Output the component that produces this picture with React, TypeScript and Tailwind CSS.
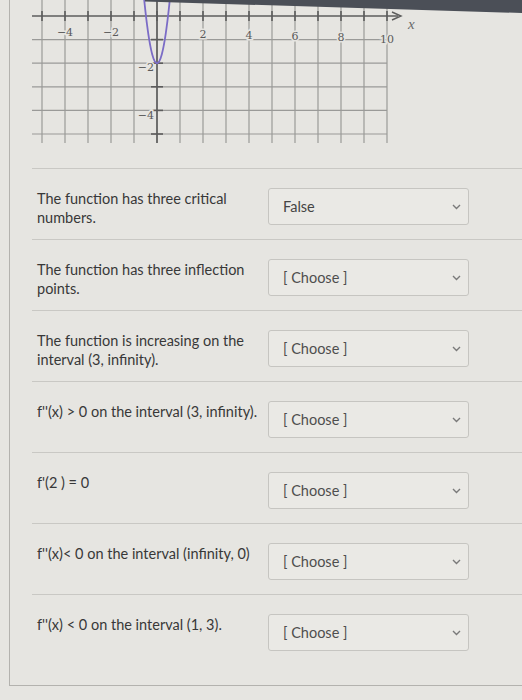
import React from "react";

const rows: { text: string; value: string }[] = [
  { text: "The function has three critical numbers.", value: "False" },
  { text: "The function has three inflection points.", value: "[ Choose ]" },
  { text: "The function is increasing on the interval (3, infinity).", value: "[ Choose ]" },
  { text: "f''(x) > 0 on the interval (3, infinity).", value: "[ Choose ]" },
  { text: "f'(2 ) = 0", value: "[ Choose ]" },
  { text: "f''(x)< 0 on the interval (infinity, 0)", value: "[ Choose ]" },
  { text: "f''(x) < 0 on the interval (1, 3).", value: "[ Choose ]" },
];

const X0 = 42;
const DX = 23;
const Y0 = 16;
const DY = 23.6;
const px = (u: number) => X0 + DX * (u + 5);
const py = (v: number) => Y0 - DY * v;

const labelCls =
  "font-['DejaVu_Serif','Liberation_Serif',serif] text-[11px] fill-[#5a5a5a] stroke-[#e6e5e1] stroke-[3px] [paint-order:stroke]";

function Graph() {
  const verticals = Array.from({ length: 16 }, (_, i) => i - 5);
  const horizontals = [-1, -2, -3, -4, -5];
  const pts: string[] = [];
  for (let i = -60; i <= 60; i++) {
    const u = i / 100;
    const v = 8.7 * u * u - 2;
    pts.push(`${px(u).toFixed(2)},${py(v).toFixed(2)}`);
  }
  const xLabels: [number, string, number][] = [
    [-4, "−4", 36],
    [-2, "−2", 36],
    [2, "2", 38],
    [4, "4", 39],
    [6, "6", 40],
    [8, "8", 41],
    [10, "10", 43],
  ];
  return (
    <svg width={512} height={168} viewBox="10 0 512 168" className="block">
      {verticals.map((u) => (
        <line key={"v" + u} x1={px(u)} y1={0} x2={px(u)} y2={143} stroke="#9a9a98" strokeWidth={1.2} />
      ))}
      {horizontals.map((v) => (
        <line key={"h" + v} x1={32} y1={py(v)} x2={px(10)} y2={py(v)} stroke="#9a9a98" strokeWidth={1.2} />
      ))}
      <line x1={32} y1={Y0} x2={398} y2={Y0} stroke="#5c5c5c" strokeWidth={1.6} />
      <path d={`M392 ${Y0 - 4} L401 ${Y0} L392 ${Y0 + 4}`} fill="none" stroke="#5c5c5c" strokeWidth={1.4} />
      {verticals.map((u) => (
        <line key={"t" + u} x1={px(u)} y1={Y0 - 5} x2={px(u)} y2={Y0 + 5} stroke="#5c5c5c" strokeWidth={1.6} />
      ))}
      <line x1={px(0)} y1={0} x2={px(0)} y2={143} stroke="#5c5c5c" strokeWidth={1.6} />
      {horizontals.map((v) => (
        <line key={"yt" + v} x1={px(0) - 6} y1={py(v)} x2={px(0) + 6} y2={py(v)} stroke="#5c5c5c" strokeWidth={1.6} />
      ))}
      {xLabels.map(([u, t, y]) => (
        <text key={"xl" + u} x={px(u)} y={y} textAnchor="middle" className={labelCls}>
          {t}
        </text>
      ))}
      <text x={px(0) - 3} y={71} textAnchor="end" className={labelCls}>
        −2
      </text>
      <text x={px(0) - 3} y={119} textAnchor="end" className={labelCls}>
        −4
      </text>
      <text x={408} y={29} className="font-['Liberation_Serif',serif] italic text-[15px] fill-[#6a6a6a]">
        x
      </text>
      <polyline points={pts.join(" ")} fill="none" stroke="#7b6cc6" strokeWidth={1.8} />
      <polygon points="145,0 522,0 522,13 145,1.5" fill="#4b4f57" />
    </svg>
  );
}

function Chevron() {
  return (
    <svg width="9" height="6" viewBox="0 0 9 6">
      <path d="M1 1 L4.5 4.5 L8 1" fill="none" stroke="#7a7a7a" strokeWidth="1.4" />
    </svg>
  );
}

export default function App() {
  return (
    <div className="w-[522px] h-[700px] bg-[#e6e5e1] overflow-hidden font-['Lato','Open_Sans',sans-serif]">
      <div className="ml-[9px] border-l border-b border-[#b3b2ae] flex flex-col">
        <Graph />
        <div className="pl-[22px] flex flex-col">
          {rows.map((r, i) => (
            <div
              key={i}
              className={`border-t border-[#c9c8c4] flex items-start pl-[5px] pt-[19px] ${
                i === rows.length - 1 ? "h-[91px]" : "h-[71px]"
              }`}
            >
              <div className="w-[226px] mt-[1px] text-[14.5px] leading-[19px] text-[#383838]">{r.text}</div>
              <div className="ml-[5px] w-[201px] h-[37px] border border-[#c6c5c1] rounded-[3px] bg-[#eae9e5] flex items-center justify-between pl-[14px] pr-[7px]">
                <span className={`text-[14.5px] ${r.value === "False" ? "text-[#444444]" : "text-[#4e4e4e]"}`}>
                  {r.value}
                </span>
                <Chevron />
              </div>
            </div>
          ))}
        </div>
      </div>
    </div>
  );
}
